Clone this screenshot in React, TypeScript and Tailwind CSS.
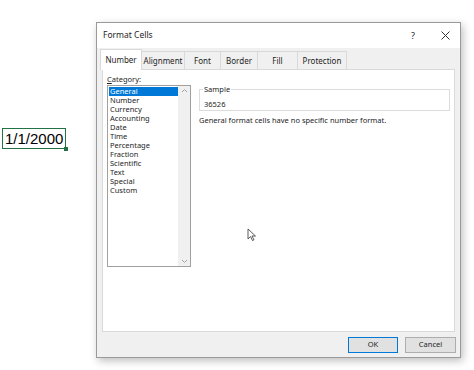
import React from "react";

const items = [
  "General",
  "Number",
  "Currency",
  "Accounting",
  "Date",
  "Time",
  "Percentage",
  "Fraction",
  "Scientific",
  "Text",
  "Special",
  "Custom",
];

const tabs = [
  { label: "Number", w: "w-[42px]" },
  { label: "Alignment", w: "w-[43px]" },
  { label: "Font", w: "w-[36px]" },
  { label: "Border", w: "w-[37px]" },
  { label: "Fill", w: "w-[40px]" },
  { label: "Protection", w: "w-[49px]" },
];

export default function App() {
  return (
    <div
      className="relative w-[474px] h-[370px] bg-white overflow-hidden text-[#1e1e1e]"
      style={{ fontFamily: '"Noto Sans", "Liberation Sans", sans-serif' }}
    >
      {/* Cell */}
      <div className="absolute left-[2px] top-[128px] w-[64px] h-[21px] border border-[#217346] flex items-center pl-[2px]">
        <span className="text-[15px] leading-none text-black" style={{ fontFamily: '"Liberation Sans", sans-serif' }}>
          1/1/2000
        </span>
        <div className="absolute -right-[3px] -bottom-[3px] w-[4px] h-[4px] bg-[#217346]" />
      </div>

      {/* Dialog */}
      <div className="absolute left-[96px] top-[22px] w-[365px] h-[336px] border border-[#9a9a9a] bg-[#f0f0f0] shadow-[2px_3px_8px_rgba(0,0,0,0.25)] flex flex-col">
        {/* Title bar */}
        <div className="h-[25px] bg-white flex items-center pl-[6px] pr-[10px] shrink-0">
          <span className="text-[8.5px] flex-1">Format Cells</span>
          <span className="text-[9px] mr-[26px]">?</span>
          <svg width="9" height="9" viewBox="0 0 9 9">
            <path d="M0.5 0.5 L8.5 8.5 M8.5 0.5 L0.5 8.5" stroke="#333" strokeWidth="1" />
          </svg>
        </div>
        {/* Tabs */}
        <div className="flex items-end h-[21px] pl-[3px] shrink-0">
          {tabs.map((t, i) =>
            i === 0 ? (
              <div
                key={t.label}
                className={`${t.w} h-[21px] bg-white border border-[#d9d9d9] border-b-0 flex items-center justify-center text-[8px] -mb-px relative z-10`}
              >
                {t.label}
              </div>
            ) : (
              <div
                key={t.label}
                className={`${t.w} h-[18px] border border-[#d9d9d9] border-l-0 border-b-0 flex items-center justify-center text-[8px]`}
              >
                {t.label}
              </div>
            )
          )}
        </div>
        {/* Panel */}
        <div className="mx-[5px] h-[263px] bg-white border border-[#d9d9d9] relative shrink-0 px-[4px] pt-[4px]">
          <div className="text-[7.5px] leading-[10px]">
            <span className="underline">C</span>ategory:
          </div>
          <div className="flex gap-[8px] mt-[1px]">
            {/* Listbox */}
            <div className="w-[84px] h-[182px] border border-[#a0a0a0] flex">
              <div className="flex-1 flex flex-col pt-[1px] pl-[1px]">
                {items.map((it, i) => (
                  <div
                    key={it}
                    className={`h-[9px] leading-[9px] text-[7.5px] pl-[1px] ${
                      i === 0 ? "bg-[#0078d7] text-white" : ""
                    }`}
                  >
                    {it}
                  </div>
                ))}
              </div>
              <div className="w-[12px] bg-[#f0f0f0] flex flex-col justify-between items-center py-[2px]">
                <svg width="7" height="5" viewBox="0 0 7 5">
                  <path d="M1 4 L3.5 1.5 L6 4" stroke="#a3a3a3" fill="none" />
                </svg>
                <svg width="7" height="5" viewBox="0 0 7 5">
                  <path d="M1 1 L3.5 3.5 L6 1" stroke="#a3a3a3" fill="none" />
                </svg>
              </div>
            </div>
            {/* Right side */}
            <div className="flex-1 flex flex-col">
              <div className="relative border border-[#dcdcdc] h-[22px] mt-[4px] pl-[4px] pt-[9px]">
                <span className="absolute -top-[6px] left-[3px] bg-white px-[1px] text-[7.5px] leading-[10px]">
                  Sample
                </span>
                <div className="text-[7.5px] leading-[10px]">36526</div>
              </div>
              <div className="text-[7.5px] leading-[10px] mt-[4px]">
                General format cells have no specific number format.
              </div>
            </div>
          </div>
          {/* cursor */}
          <svg
            className="absolute left-[144px] top-[158px]"
            width="10"
            height="14"
            viewBox="0 0 10 14"
          >
            <path d="M1 1 L1 11 L3.5 8.5 L5.5 12.5 L7 11.8 L5 8 L8.5 8 Z" fill="white" stroke="#333" strokeWidth="0.8" />
          </svg>
        </div>
        {/* Footer */}
        <div className="flex justify-end items-center gap-[7px] pr-[4px] flex-1">
          <button className="w-[50px] h-[16px] bg-[#e1e1e1] border border-[#0078d7] text-[7.5px] leading-none">
            OK
          </button>
          <button className="w-[51px] h-[16px] bg-[#e1e1e1] border border-[#adadad] text-[7.5px] leading-none">
            Cancel
          </button>
        </div>
      </div>
    </div>
  );
}
